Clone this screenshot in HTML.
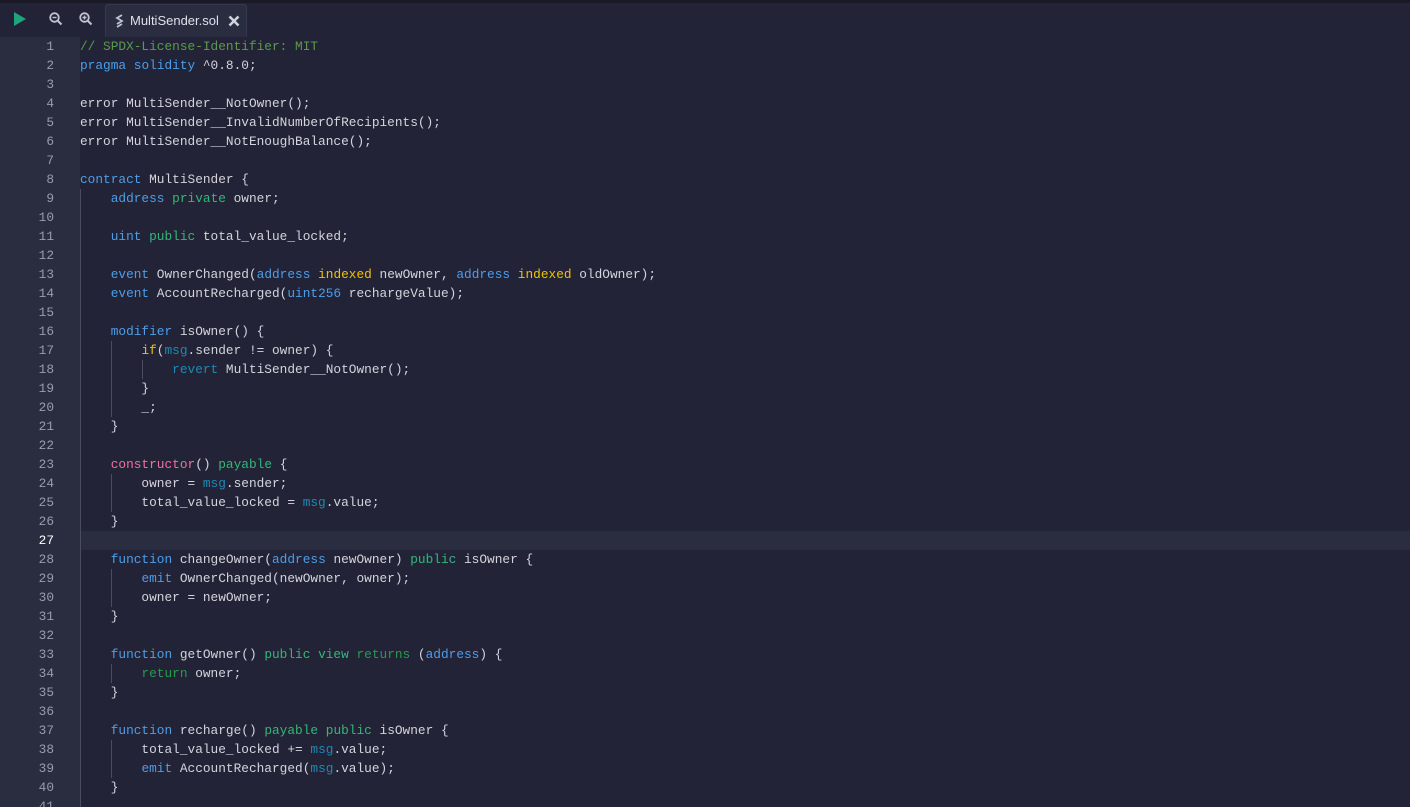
<!DOCTYPE html>
<html style="overflow:hidden"><head><meta charset="utf-8"><style>
html,body{overflow:hidden;}
body{margin:0;width:1410px;height:807px;background:#222336;position:relative;font-family:"Liberation Mono",monospace;}
#top{position:absolute;left:0;top:0;width:1410px;height:3px;background:#191a26;}
#bar{position:absolute;left:0;top:3px;width:1410px;height:34px;background:#222336;}
#tab{position:absolute;left:105px;top:4px;width:142px;height:33px;background:#2a2c3f;border:1px solid #363850;border-bottom:none;border-radius:3px 3px 0 0;box-sizing:border-box;font-family:"Liberation Sans",sans-serif;font-size:13px;color:#e0e0ea;}
#gutter{position:absolute;left:0;top:37px;width:80px;height:770px;background:#2a2c3f;}
.hl{position:absolute;left:80px;top:531px;width:1330px;height:19px;background:#2a2c3f;}
.ln{position:absolute;left:0;width:54px;text-align:right;font-size:12.8px;color:#9a9cab;line-height:19px;}
.cl{position:absolute;left:80px;font-size:12.8px;color:#d4d4dc;line-height:19px;white-space:pre;}
.g{position:absolute;width:1px;background:#4a4c60;}
.c{color:#5b9a4e}.k{color:#4d9ee8}.y{color:#f2c200}.p{color:#f0709e}.gr{color:#32b878}.dg{color:#289a4e}.m{color:#1f89b5}
#code{position:absolute;left:0;top:0;width:1410px;height:807px;overflow:hidden;}
</style></head><body>
<div id="top"></div><div id="bar"></div>
<svg style="position:absolute;left:13px;top:11px" width="14" height="16"><path d="M1 1 L13 8 L1 15 Z" fill="#1fa57a"/></svg>
<svg style="position:absolute;left:49px;top:12px" width="14" height="14"><circle cx="5.5" cy="5.5" r="4.3" fill="none" stroke="#c0c2d0" stroke-width="1.8"/><path d="M8.5 8.5 L12.5 12.5" stroke="#c0c2d0" stroke-width="2"/><path d="M3.5 5.5 H7.5" stroke="#c0c2d0" stroke-width="1.4"/></svg>
<svg style="position:absolute;left:79px;top:12px" width="14" height="14"><circle cx="5.5" cy="5.5" r="4.3" fill="none" stroke="#c0c2d0" stroke-width="1.8"/><path d="M8.5 8.5 L12.5 12.5" stroke="#c0c2d0" stroke-width="2"/><path d="M3.5 5.5 H7.5 M5.5 3.5 V7.5" stroke="#c0c2d0" stroke-width="1.4"/></svg>
<div id="tab"><svg style="position:absolute;left:9px;top:9px" width="9" height="14"><path d="M7 1 L2 4 L7 7 L2 10 M2 13 L7 10" fill="none" stroke="#c0c2d0" stroke-width="1.8"/></svg><span style="position:absolute;left:24px;top:8px">MultiSender.sol</span><svg style="position:absolute;left:122px;top:10px" width="12" height="12"><path d="M1.5 1.5 L10.5 10.5 M10.5 1.5 L1.5 10.5" stroke="#d0d2dc" stroke-width="2.6"/></svg></div>
<div id="gutter"></div>
<div class="hl"></div>
<div class="g" style="left:80px;top:189px;height:618px"></div>
<div class="g" style="left:111px;top:341px;height:76px"></div>
<div class="g" style="left:142px;top:360px;height:19px"></div>
<div class="g" style="left:111px;top:474px;height:38px"></div>
<div class="g" style="left:111px;top:569px;height:38px"></div>
<div class="g" style="left:111px;top:664px;height:19px"></div>
<div class="g" style="left:111px;top:740px;height:38px"></div>
<div id="code"></div>
<script>
const L=[
'<span class="c">// SPDX-License-Identifier: MIT</span>',
'<span class="k">pragma</span> <span class="k">solidity</span> ^0.8.0;',
'',
'error MultiSender__NotOwner();',
'error MultiSender__InvalidNumberOfRecipients();',
'error MultiSender__NotEnoughBalance();',
'',
'<span class="k">contract</span> MultiSender {',
'    <span class="k">address</span> <span class="gr">private</span> owner;',
'',
'    <span class="k">uint</span> <span class="gr">public</span> total_value_locked;',
'',
'    <span class="k">event</span> OwnerChanged(<span class="k">address</span> <span class="y">indexed</span> newOwner, <span class="k">address</span> <span class="y">indexed</span> oldOwner);',
'    <span class="k">event</span> AccountRecharged(<span class="k">uint256</span> rechargeValue);',
'',
'    <span class="k">modifier</span> isOwner() {',
'        <span class="y">if</span>(<span class="m">msg</span>.sender != owner) {',
'            <span class="m">revert</span> MultiSender__NotOwner();',
'        }',
'        _;',
'    }',
'',
'    <span class="p">constructor</span>() <span class="gr">payable</span> {',
'        owner = <span class="m">msg</span>.sender;',
'        total_value_locked = <span class="m">msg</span>.value;',
'    }',
'',
'    <span class="k">function</span> changeOwner(<span class="k">address</span> newOwner) <span class="gr">public</span> isOwner {',
'        <span class="k">emit</span> OwnerChanged(newOwner, owner);',
'        owner = newOwner;',
'    }',
'',
'    <span class="k">function</span> getOwner() <span class="gr">public</span> <span class="gr">view</span> <span class="dg">returns</span> (<span class="k">address</span>) {',
'        <span class="dg">return</span> owner;',
'    }',
'',
'    <span class="k">function</span> recharge() <span class="gr">payable</span> <span class="gr">public</span> isOwner {',
'        total_value_locked += <span class="m">msg</span>.value;',
'        <span class="k">emit</span> AccountRecharged(<span class="m">msg</span>.value);',
'    }',
''];
let h='';
L.forEach((t,i)=>{const y=37+i*19;h+=`<div class="ln" style="top:${y}px;${i==26?'color:#fff':''}">${i+1}</div><div class="cl" style="top:${y}px">${t}</div>`;});
document.getElementById('code').innerHTML=h;
</script>
</body></html>
